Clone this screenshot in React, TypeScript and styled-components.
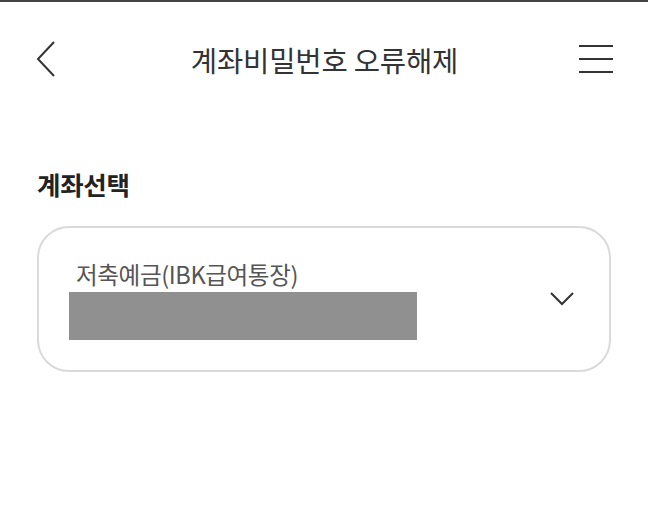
import React from 'react';
import styled, { createGlobalStyle } from 'styled-components';

const GlobalStyle = createGlobalStyle`
    html, body {
        margin: 0;
        background: #fff;
    }
    body {
        font-family: "Noto Sans CJK KR", "Noto Sans", sans-serif;
        color: #222;
    }
`;

const Page = styled.div`
    width: 648px;
    min-height: 510px;
    border-top: 2px solid #444;
    box-sizing: border-box;
`;

const Header = styled.header`
    height: 114px;
    display: grid;
    grid-template-columns: 60px 1fr 60px;
    align-items: center;
    padding: 0 35px 0 36px;
`;

const IconButton = styled.button<{ $align?: 'start' | 'end' }>`
    border: 0;
    background: none;
    padding: 0;
    display: flex;
    justify-content: ${(p) => (p.$align === 'end' ? 'flex-end' : 'flex-start')};
    color: #333;
`;

const Title = styled.h1`
    margin: 0;
    text-align: center;
    font-size: 28.6px;
    font-weight: 400;
    color: #333;
    letter-spacing: -0.2px;
`;

const Content = styled.main`
    padding: 50px 37px 0;
`;

const SectionLabel = styled.h2`
    margin: 0 0 24px;
    font-size: 25.5px;
    font-weight: 700;
    color: #222;
    line-height: 36px;
    letter-spacing: -0.3px;
`;

const Select = styled.div`
    height: 146px;
    border: 2px solid #dadada;
    border-radius: 32px;
    box-sizing: border-box;
    display: flex;
    align-items: center;
    padding: 0 35px 0 30px;
`;

const AccountInfo = styled.div`
    flex: 1;
    display: flex;
    flex-direction: column;
`;

const AccountName = styled.span`
    font-size: 23.6px;
    color: #555;
    line-height: 32px;
    padding-left: 7px;
    letter-spacing: -0.4px;
`;

const Masked = styled.div`
    width: 348px;
    height: 48px;
    background: #909090;
    margin-top: 2px;
`;

export default function App() {
    return (
        <>
            <GlobalStyle />
            <Page>
                <Header>
                    <IconButton aria-label="뒤로">
                        <svg width="20" height="38" viewBox="0 0 20 38" fill="none">
                            <path d="M18 2 L2 19 L18 36" stroke="#333" strokeWidth="2" />
                        </svg>
                    </IconButton>
                    <Title>계좌비밀번호 오류해제</Title>
                    <IconButton $align="end" aria-label="메뉴">
                        <svg width="34" height="30" viewBox="0 0 34 30" fill="none">
                            <path d="M0 2 H34 M0 15 H34 M0 28 H34" stroke="#333" strokeWidth="2.2" />
                        </svg>
                    </IconButton>
                </Header>
                <Content>
                    <SectionLabel>계좌선택</SectionLabel>
                    <Select>
                        <AccountInfo>
                            <AccountName>저축예금(IBK급여통장)</AccountName>
                            <Masked />
                        </AccountInfo>
                        <svg width="24" height="14" viewBox="0 0 24 14" fill="none">
                            <path d="M1 1 L12 12 L23 1" stroke="#333" strokeWidth="2" />
                        </svg>
                    </Select>
                </Content>
            </Page>
        </>
    );
}
